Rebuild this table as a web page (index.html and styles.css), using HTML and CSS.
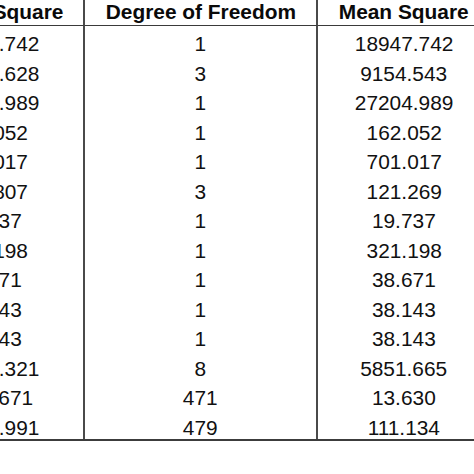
FILE: index.html
```html
<!DOCTYPE html>
<html lang="en">
<head>
<meta charset="utf-8">
<title>ANOVA table</title>
<link rel="stylesheet" href="styles.css">
</head>
<body>
<div class="sheet">
  <div class="cell head"><span>Sum of Square</span></div>
  <div class="cell head"><span>Degree of Freedom</span></div>
  <div class="cell head last"><span>Mean Square</span></div>

  <div class="cell"><span>18947.742</span></div><div class="cell"><span>1</span></div><div class="cell last"><span>18947.742</span></div>
  <div class="cell"><span>27463.628</span></div><div class="cell"><span>3</span></div><div class="cell last"><span>9154.543</span></div>
  <div class="cell"><span>27204.989</span></div><div class="cell"><span>1</span></div><div class="cell last"><span>27204.989</span></div>
  <div class="cell"><span>162.052</span></div><div class="cell"><span>1</span></div><div class="cell last"><span>162.052</span></div>
  <div class="cell"><span>701.017</span></div><div class="cell"><span>1</span></div><div class="cell last"><span>701.017</span></div>
  <div class="cell"><span>363.807</span></div><div class="cell"><span>3</span></div><div class="cell last"><span>121.269</span></div>
  <div class="cell"><span>19.737</span></div><div class="cell"><span>1</span></div><div class="cell last"><span>19.737</span></div>
  <div class="cell"><span>321.198</span></div><div class="cell"><span>1</span></div><div class="cell last"><span>321.198</span></div>
  <div class="cell"><span>38.671</span></div><div class="cell"><span>1</span></div><div class="cell last"><span>38.671</span></div>
  <div class="cell"><span>38.143</span></div><div class="cell"><span>1</span></div><div class="cell last"><span>38.143</span></div>
  <div class="cell"><span>38.143</span></div><div class="cell"><span>1</span></div><div class="cell last"><span>38.143</span></div>
  <div class="cell"><span>46813.321</span></div><div class="cell"><span>8</span></div><div class="cell last"><span>5851.665</span></div>
  <div class="cell"><span>6419.671</span></div><div class="cell"><span>471</span></div><div class="cell last"><span>13.630</span></div>
  <div class="cell"><span>53233.991</span></div><div class="cell"><span>479</span></div><div class="cell last"><span>111.134</span></div>
</div>
</body>
</html>
```
FILE: styles.css
```css
html, body {
  margin: 0;
  padding: 0;
  background: #ffffff;
  overflow: hidden;
}

body {
  width: 474px;
  height: 474px;
  font-family: "Liberation Sans", Arial, sans-serif;
  font-size: 19.5px;
  color: #111111;
}

.sheet {
  display: grid;
  grid-template-columns: 188px 233px 172px;
  grid-template-rows: 26px repeat(14, 29.5px);
  width: 593px;
  margin-left: -103px;
  border-bottom: 2px solid #3c3c3c;
}

.cell {
  box-sizing: border-box;
  display: flex;
  align-items: center;
  justify-content: center;
  padding-top: 8px;
  border-right: 2px solid #4a4a4a;
  white-space: nowrap;
}

.cell.last {
  border-right: none;
}

.cell span {
  display: inline-block;
  transform: scaleX(1.07);
}

.head {
  padding-top: 0;
  font-weight: bold;
  color: #0a0a0a;
  border-bottom: 1px solid #3a3a3a;
}
```
